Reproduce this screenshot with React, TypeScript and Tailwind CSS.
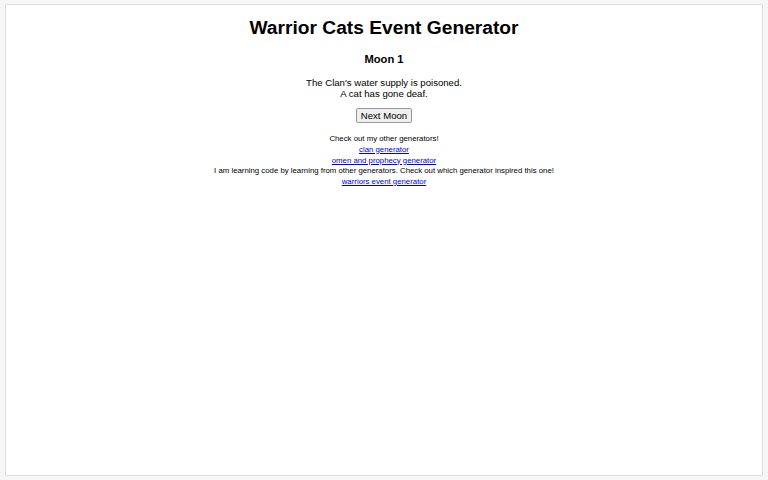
export default function App() {
  return (
    <div className="h-[480px] w-[768px] bg-[#f6f6f6] p-[4px_5px_4px_5px]" style={{ fontFamily: '"Liberation Sans", Arial, sans-serif' }}>
      <div className="flex h-full flex-col items-center border border-[#dcdcdc] bg-white text-center text-black">
        <h1 className="mt-[11px] text-[19.2px] leading-[24px] font-bold">Warrior Cats Event Generator</h1>
        <h2 className="mt-[13px] text-[11.2px] leading-[13px] font-bold">Moon 1</h2>
        <div className="mt-[11px] text-[9.6px] leading-[11px]">
          <p>The Clan's water supply is poisoned.</p>
          <p>A cat has gone deaf.</p>
        </div>
        <button className="mt-[9px] h-[15px] rounded-[2px] border border-[#999] bg-[#efefef] px-[4px] text-[9.6px] leading-[13px]">
          Next Moon
        </button>
        <div className="mt-[11px] text-[7.8px] leading-[10.75px]">
          <p>Check out my other generators!</p>
          <p><a href="#" className="text-[#0000ee] underline">clan generator</a></p>
          <p><a href="#" className="text-[#0000ee] underline">omen and prophecy generator</a></p>
          <p>I am learning code by learning from other generators. Check out which generator inspired this one!</p>
          <p><a href="#" className="text-[#0000ee] underline">warriors event generator</a></p>
        </div>
      </div>
    </div>
  );
}
